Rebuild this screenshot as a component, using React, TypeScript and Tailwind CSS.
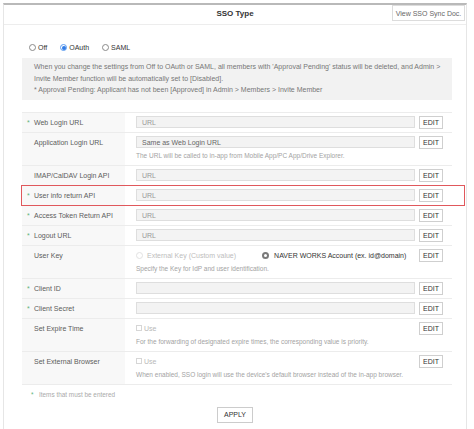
import React from 'react';

type Row = {
  label: string;
  required?: boolean;
  kind: 'input' | 'userKey' | 'check';
  value?: string;
  dark?: boolean;
  help?: string;
  highlight?: boolean;
};

const rows: Row[] = [
  { label: 'Web Login URL', required: true, kind: 'input', value: 'URL' },
  {
    label: 'Application Login URL',
    kind: 'input',
    value: 'Same as Web Login URL',
    dark: true,
    help: 'The URL will be called to in-app from Mobile App/PC App/Drive Explorer.',
  },
  { label: 'IMAP/CalDAV Login API', kind: 'input', value: 'URL' },
  { label: 'User info return API', required: true, kind: 'input', value: 'URL', highlight: true },
  { label: 'Access Token Return API', required: true, kind: 'input', value: 'URL' },
  { label: 'Logout URL', required: true, kind: 'input', value: 'URL' },
  { label: 'User Key', kind: 'userKey', help: 'Specify the Key for IdP and user identification.' },
  { label: 'Client ID', required: true, kind: 'input', value: '' },
  { label: 'Client Secret', required: true, kind: 'input', value: '' },
  {
    label: 'Set Expire Time',
    kind: 'check',
    help: 'For the forwarding of designated expire times, the corresponding value is priority.',
  },
  {
    label: 'Set External Browser',
    kind: 'check',
    help: "When enabled, SSO login will use the device's default browser instead of the in-app browser.",
  },
];

function EditButton() {
  return (
    <button className="ml-[4px] flex h-[13px] w-[24px] shrink-0 items-center justify-center border border-[#cfcfcf] bg-white text-[7px] font-medium leading-none text-[#333]">
      EDIT
    </button>
  );
}

function Radio({ label, checked }: { label: string; checked?: boolean }) {
  return (
    <label className="flex items-center gap-[2px]">
      {checked ? (
        <span className="flex h-[7px] w-[7px] items-center justify-center rounded-full border border-[#5b9bf0] bg-white">
          <span className="h-[4px] w-[4px] rounded-full bg-[#2f7be6]" />
        </span>
      ) : (
        <span className="h-[7px] w-[7px] rounded-full border border-[#8a8a8a] bg-white" />
      )}
      <span className="text-[7px] leading-none text-[#333]">{label}</span>
    </label>
  );
}

function FieldRow({ row }: { row: Row }) {
  return (
    <div className="relative flex border-b border-[#ececec]">
      <div className="flex w-[103px] shrink-0 items-start bg-[#f8f8f8] pt-[3px] pl-[5px]">
        <span className="w-[7px] text-[7px] leading-[13px] text-[#5fb37a]">{row.required ? '*' : ''}</span>
        <span className="text-[7px] leading-[13px] text-[#5c5c5c]">{row.label}</span>
      </div>
      <div className="flex-1 pt-[3px] pr-[9px] pb-[3px] pl-[11px]">
        <div className="flex h-[13px] items-center">
          {row.kind === 'input' && (
            <div
              className={`flex h-[12px] flex-1 items-center border border-[#dedede] bg-[#f3f3f3] pl-[5px] text-[7px] leading-none ${
                row.dark ? 'text-[#666]' : 'text-[#999]'
              }`}
            >
              {row.value}
            </div>
          )}
          {row.kind === 'userKey' && (
            <div className="flex flex-1 items-center">
              <span className="h-[7px] w-[7px] rounded-full border border-[#e2e2e2] bg-white" />
              <span className="ml-[4px] text-[7px] leading-none text-[#bdbdbd]">External Key (Custom value)</span>
              <span className="ml-[26px] h-[7px] w-[7px] rounded-full border-[2px] border-[#7a7a7a] bg-white" />
              <span className="ml-[5px] text-[7px] font-medium leading-none text-[#333]">
                NAVER WORKS Account (ex. id@domain)
              </span>
            </div>
          )}
          {row.kind === 'check' && (
            <div className="flex flex-1 items-center">
              <span className="h-[6px] w-[6px] border border-[#d6d6d6] bg-white" />
              <span className="ml-[2px] text-[7px] leading-none text-[#b8b8b8]">Use</span>
            </div>
          )}
          <EditButton />
        </div>
        {row.help && (
          <div className="mt-[2px] pb-[2px] text-[6.5px] leading-[9px] whitespace-nowrap text-[#a3a3a3]">{row.help}</div>
        )}
      </div>
      {row.highlight && (
        <div className="pointer-events-none absolute -top-[1px] -bottom-[1px] -left-[1px] -right-[13px] border border-[#e0585c]" />
      )}
    </div>
  );
}

export default function App() {
  return (
    <div className="min-h-[429px] bg-white px-[3px] pt-[3px]" style={{ fontFamily: '"Liberation Sans", Arial, sans-serif' }}>
      <div className="w-[464px] border-x border-t-[2px] border-x-[#e6e6e6] border-t-[#b9b9b9] bg-white pb-[12px]">
        {/* header */}
        <div className="grid h-[20px] grid-cols-[1fr_auto_1fr] border-b border-[#ededed]">
          <div />
          <div className="flex items-center pb-[2px] text-[8px] font-bold text-[#333]">SSO Type</div>
          <div className="flex items-start justify-end pr-[1px]">
            <button className="flex h-[16px] w-[73px] items-center justify-center border border-[#dcdcdc] bg-white text-[7px] leading-none text-[#666]">
              View SSO Sync Doc.
            </button>
          </div>
        </div>

        {/* sso type radios */}
        <div className="mt-[18px] flex h-[9px] items-center gap-[13px] pl-[25px]">
          <Radio label="Off" />
          <Radio label="OAuth" checked />
          <Radio label="SAML" />
        </div>

        {/* notice */}
        <div className="mt-[6px] ml-[18px] w-[430px] bg-[#f2f2f2] pt-[3px] pb-[4px] pl-[12px] text-[7px] leading-[11.5px] whitespace-nowrap text-[#777]">
          When you change the settings from Off to OAuth or SAML, all members with 'Approval Pending' status will be deleted, and Admin &gt;
          <br />
          Invite Member function will be automatically set to [Disabled].
          <br />* Approval Pending: Applicant has not been [Approved] in Admin &gt; Members &gt; Invite Member
        </div>

        {/* fields */}
        <div className="mt-[12px] ml-[18px] w-[430px] border-t border-[#ececec]">
          {rows.map((row) => (
            <FieldRow key={row.label} row={row} />
          ))}
        </div>

        <div className="mt-[5px] ml-[27px] flex items-center text-[6.4px] leading-[9px] text-[#aaa]">
          <span className="w-[8px] text-[#5fb37a]">*</span>
          <span>Items that must be entered</span>
        </div>

        <div className="mt-[8px] flex justify-center">
          <button className="flex h-[16px] w-[36px] items-center justify-center border border-[#cccccc] bg-white text-[7px] font-medium leading-none text-[#333]">
            APPLY
          </button>
        </div>
      </div>
    </div>
  );
}
